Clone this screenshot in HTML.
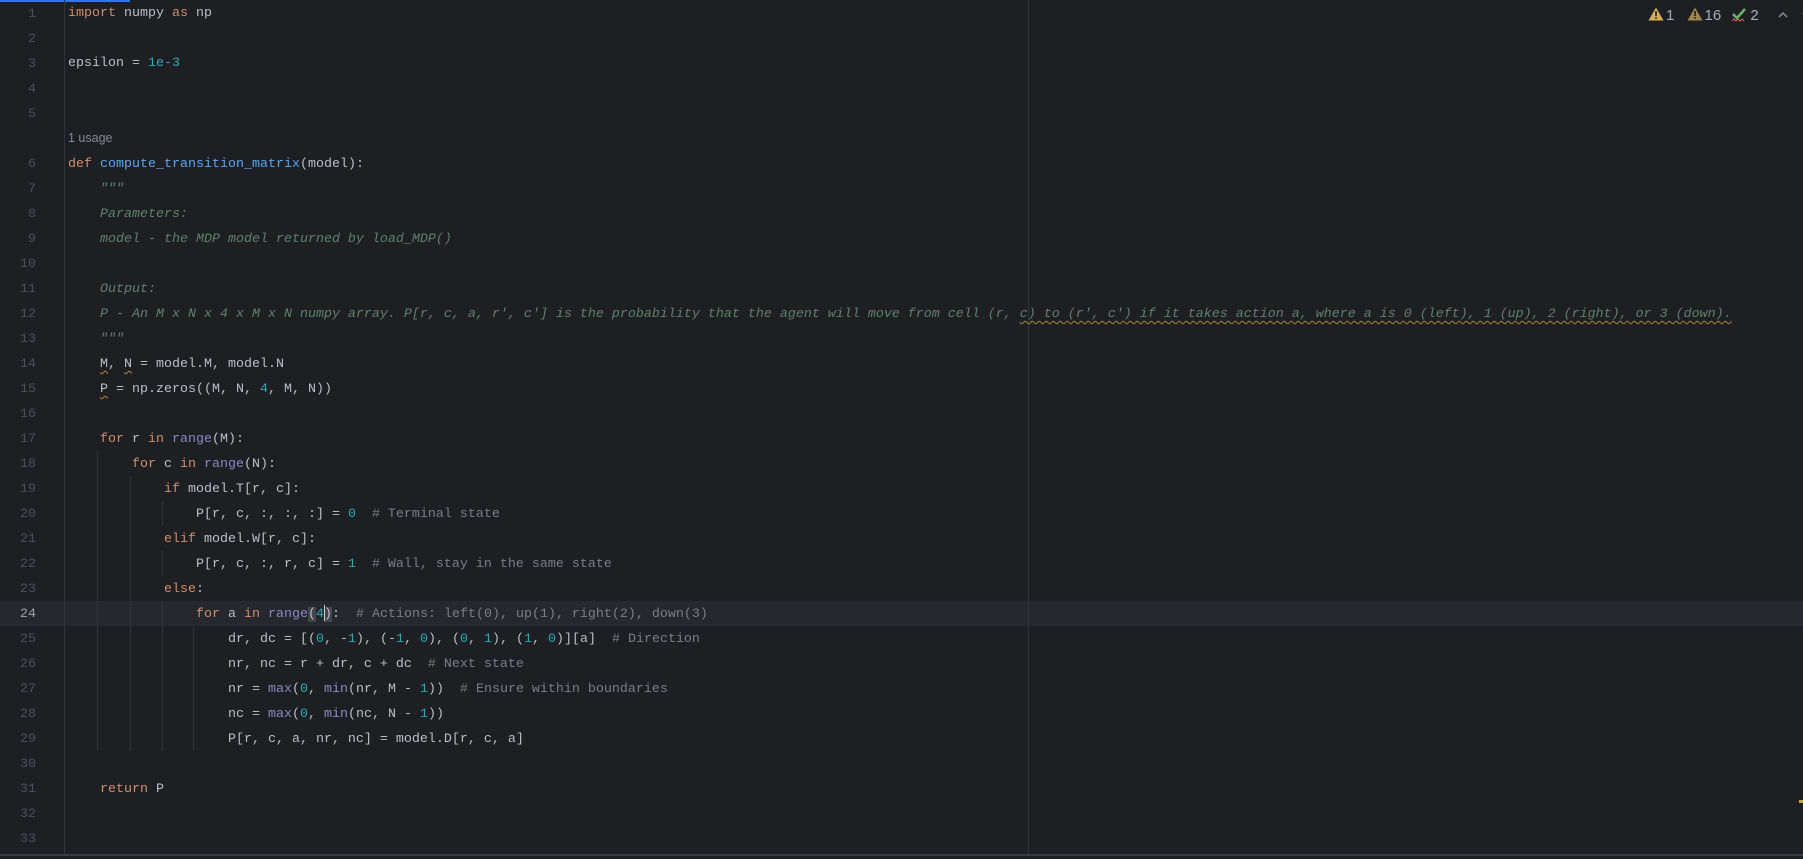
<!DOCTYPE html>
<html><head><meta charset="utf-8"><style>
html,body{margin:0;padding:0;background:#1e1f22;width:1803px;height:859px;overflow:hidden;position:relative}
.ln{position:absolute;left:0;width:36px;text-align:right;color:#4b5059;font:13.3px "Liberation Mono",monospace;line-height:25px}
.c{position:absolute;left:68px;white-space:pre;color:#bcbec4;font:13.33px "Liberation Mono",monospace;line-height:25px}
.k{color:#cf8e6d}.f{color:#56a8f5}.n{color:#2aacb8}.d{color:#5f826b;font-style:italic}.cm{color:#7a7e85}.b{color:#8888c6}
.w{text-decoration:underline wavy #a5893a;text-underline-offset:3px;text-decoration-thickness:1px}
.g{position:absolute;width:1px;background:#313438}
</style></head><body>
<div style="position:absolute;left:0;top:0;width:130px;height:2px;background:#3574f0"></div>
<div style="position:absolute;left:0;top:601px;width:1803px;height:25px;background:#26282e"></div>
<div style="position:absolute;left:64px;top:0;width:1px;height:854px;background:#313438"></div>
<div style="position:absolute;left:1028px;top:0;width:1px;height:854px;background:#313438"></div>
<div style="position:absolute;left:0;top:854px;width:1803px;height:2px;background:#393b40"></div>
<div style="position:absolute;left:1799px;top:800px;width:4px;height:3px;background:#c9a13d"></div>
<div class="g" style="left:97px;top:451px;height:300px"></div>
<div class="g" style="left:130px;top:476px;height:275px"></div>
<div class="g" style="left:162px;top:501px;height:25px"></div>
<div class="g" style="left:162px;top:551px;height:25px"></div>
<div class="g" style="left:162px;top:601px;height:150px"></div>
<div class="g" style="left:193px;top:626px;height:125px"></div>
<div class="c" style="top:1px"><span class="k">import</span> numpy <span class="k">as</span> np

epsilon = <span class="n">1e-3</span>


<span style="color:#868a91;font-family:'Liberation Sans',sans-serif;font-size:12.5px">1 usage</span>
<span class="k">def</span> <span class="f">compute_transition_matrix</span>(model):
    <span class="d">"""</span>
<span class="d">    Parameters:</span>
<span class="d">    model - the MDP model returned by load_MDP()</span>

<span class="d">    Output:</span>
<span class="d">    P - An M x N x 4 x M x N numpy array. P[r, c, a, r', c'] is the probability that the agent will move from cell (r, </span><span class="d w">c) to (r', c') if it takes action a, where a is 0 (left), 1 (up), 2 (right), or 3 (down).</span>
<span class="d">    """</span>
    <span class="w">M</span>, <span class="w">N</span> = model.M, model.N
    <span class="w">P</span> = np.zeros((M, N, <span class="n">4</span>, M, N))

    <span class="k">for</span> r <span class="k">in</span> <span class="b">range</span>(M):
        <span class="k">for</span> c <span class="k">in</span> <span class="b">range</span>(N):
            <span class="k">if</span> model.T[r, c]:
                P[r, c, :, :, :] = <span class="n">0</span>  <span class="cm"># Terminal state</span>
            <span class="k">elif</span> model.W[r, c]:
                P[r, c, :, r, c] = <span class="n">1</span>  <span class="cm"># Wall, stay in the same state</span>
            <span class="k">else</span>:
                <span class="k">for</span> a <span class="k">in</span> <span class="b">range</span><span style="background:#43454a">(</span><span class="n">4</span><span style="background:#43454a">)</span>:  <span class="cm"># Actions: left(0), up(1), right(2), down(3)</span>
                    dr, dc = [(<span class="n">0</span>, -<span class="n">1</span>), (-<span class="n">1</span>, <span class="n">0</span>), (<span class="n">0</span>, <span class="n">1</span>), (<span class="n">1</span>, <span class="n">0</span>)][a]  <span class="cm"># Direction</span>
                    nr, nc = r + dr, c + dc  <span class="cm"># Next state</span>
                    nr = <span class="b">max</span>(<span class="n">0</span>, <span class="b">min</span>(nr, M - <span class="n">1</span>))  <span class="cm"># Ensure within boundaries</span>
                    nc = <span class="b">max</span>(<span class="n">0</span>, <span class="b">min</span>(nc, N - <span class="n">1</span>))
                    P[r, c, a, nr, nc] = model.D[r, c, a]

    <span class="k">return</span> P</div>
<div style="position:absolute;left:324px;top:605px;width:1px;height:16px;background:#ced0d6"></div>
<div class="ln" style="top:1px">1<br>2<br>3<br>4<br>5<br><br>6<br>7<br>8<br>9<br>10<br>11<br>12<br>13<br>14<br>15<br>16<br>17<br>18<br>19<br>20<br>21<br>22<br>23<br><span style="color:#a1a3ab">24</span><br>25<br>26<br>27<br>28<br>29<br>30<br>31<br>32<br>33</div>
<div style="position:absolute;top:7px;left:1648px;font:15px 'Liberation Sans',sans-serif;color:#a8adbd;white-space:nowrap">
<svg width="16" height="14" viewBox="0 0 16 14" style="vertical-align:-1px"><path d="M8 0.5L15.5 13.5H0.5Z" fill="#d6ae58"/><rect x="7.2" y="4" width="1.6" height="5" fill="#1e1f22"/><rect x="7.2" y="10" width="1.6" height="1.6" fill="#1e1f22"/></svg><span style="margin-left:2px">1</span>
<svg width="16" height="14" viewBox="0 0 16 14" style="vertical-align:-1px;margin-left:8px"><path d="M8 0.5L15.5 13.5H0.5Z" fill="#9e8450"/><rect x="7.2" y="4" width="1.6" height="5" fill="#1e1f22"/><rect x="7.2" y="10" width="1.6" height="1.6" fill="#1e1f22"/></svg><span style="margin-left:2px">16</span>
<svg width="16" height="16" viewBox="0 0 16 16" style="vertical-align:-3px;margin-left:6px"><path d="M2 7L6 11L14 2" stroke="#5fb865" stroke-width="2.5" fill="none"/><path d="M1 14l2-2 2 2 2-2 2 2 2-2 2 2" stroke="#db5c5c" stroke-width="1" fill="none"/></svg><span style="margin-left:3px">2</span>
<svg width="12" height="10" viewBox="0 0 12 10" style="margin-left:14px"><path d="M2 7L6 3L10 7" stroke="#8c8f96" stroke-width="1.5" fill="none"/></svg>
<svg width="12" height="10" viewBox="0 0 12 10" style="margin-left:8px"><path d="M2 3L6 7L10 3" stroke="#8c8f96" stroke-width="1.5" fill="none"/></svg>
</div>
</body></html>
